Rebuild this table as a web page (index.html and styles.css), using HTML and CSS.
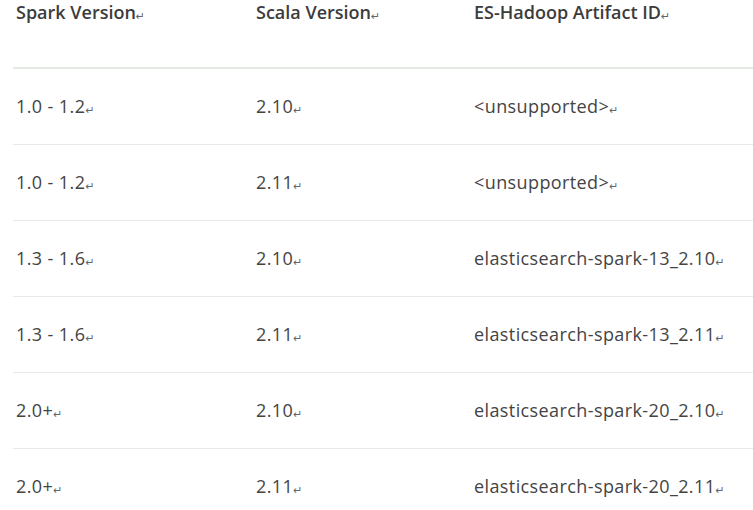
FILE: index.html
```html
<!DOCTYPE html>
<html>
<head>
<meta charset="utf-8">
<link rel="stylesheet" href="styles.css">
</head>
<body>
<table class="compat">
  <colgroup><col class="c1"><col class="c2"><col class="c3"></colgroup>
  <thead>
    <tr><th>Spark Version<span class="ret">↵</span></th><th>Scala Version<span class="ret">↵</span></th><th>ES-Hadoop Artifact ID<span class="ret">↵</span></th></tr>
  </thead>
  <tbody>
    <tr><td>1.0 - 1.2<span class="ret">↵</span></td><td>2.10<span class="ret">↵</span></td><td>&lt;unsupported&gt;<span class="ret">↵</span></td></tr>
    <tr><td>1.0 - 1.2<span class="ret">↵</span></td><td>2.11<span class="ret">↵</span></td><td>&lt;unsupported&gt;<span class="ret">↵</span></td></tr>
    <tr><td>1.3 - 1.6<span class="ret">↵</span></td><td>2.10<span class="ret">↵</span></td><td>elasticsearch-spark-13_2.10<span class="ret">↵</span></td></tr>
    <tr><td>1.3 - 1.6<span class="ret">↵</span></td><td>2.11<span class="ret">↵</span></td><td>elasticsearch-spark-13_2.11<span class="ret">↵</span></td></tr>
    <tr><td>2.0+<span class="ret">↵</span></td><td>2.10<span class="ret">↵</span></td><td>elasticsearch-spark-20_2.10<span class="ret">↵</span></td></tr>
    <tr><td>2.0+<span class="ret">↵</span></td><td>2.11<span class="ret">↵</span></td><td>elasticsearch-spark-20_2.11<span class="ret">↵</span></td></tr>
  </tbody>
</table>
</body>
</html>
```
FILE: styles.css
```css
html, body {
  margin: 0;
  padding: 0;
  background: #fff;
  overflow: hidden;
}
.compat {
  margin-left: 13px;
  width: 800px;
  border-collapse: collapse;
  table-layout: fixed;
  font-family: "Open Sans", "Liberation Sans", sans-serif;
  font-size: 18px;
  line-height: normal;
  color: #444;
}
.c1 { width: 240px; }
.c2 { width: 218px; }
.c3 { width: 342px; }
th {
  text-align: left;
  font-weight: 600;
  vertical-align: top;
  padding: 0 3px;
  height: 67px;
  border-bottom: 2px solid #e4e9e4;
  color: #3c3c3c;
}
td {
  height: 73px;
  padding: 0 3px 2px 3px;
  vertical-align: middle;
  border-bottom: 1px solid #e9e9e9;
  white-space: nowrap;
  letter-spacing: 0.4px;
}
.ret {
  font-family: "DejaVu Sans", sans-serif;
  font-size: 11px;
  font-weight: normal;
  letter-spacing: 0;
  color: #666;
  vertical-align: -1px;
}
```
